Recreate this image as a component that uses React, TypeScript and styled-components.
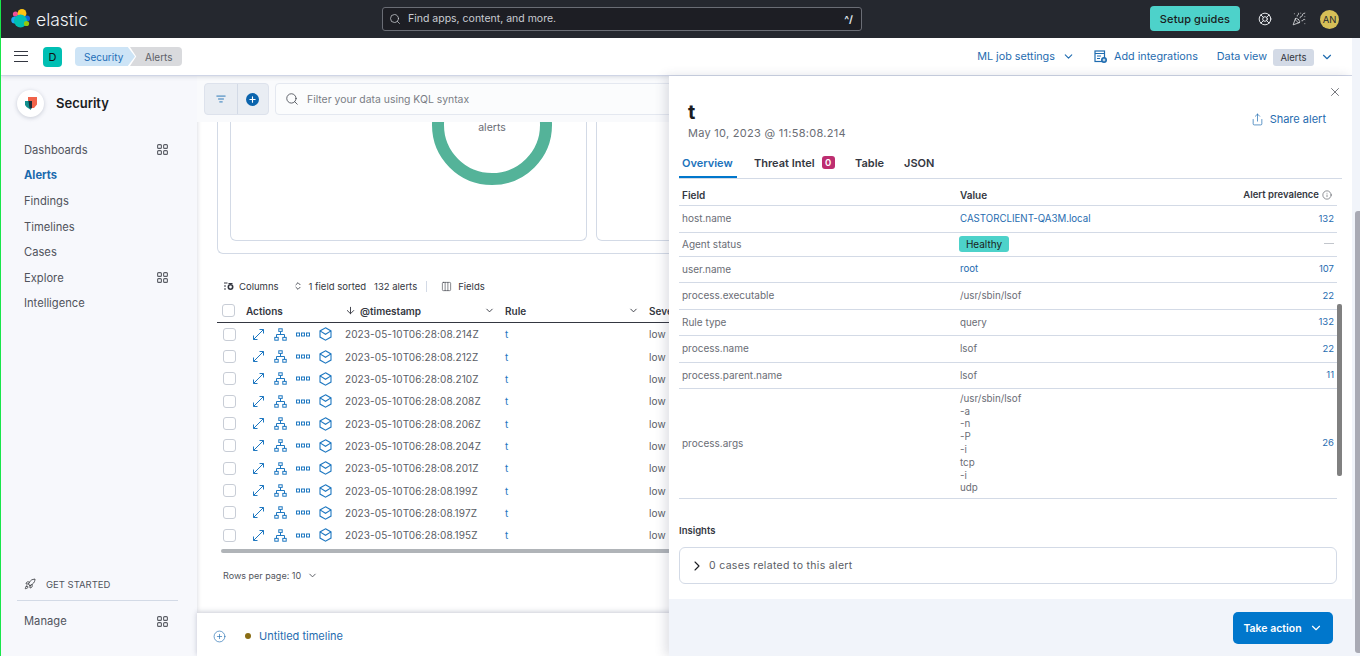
import React from "react"
import styled, { createGlobalStyle } from "styled-components"
import {
  ArrowDown,
  ChevronDown,
  ChevronRight,
  ChevronsUpDown,
  CirclePlus,
  Columns3,
  Info,
  LifeBuoy,
  ListFilter,
  PartyPopper,
  Plus,
  Rocket,
  Search,
  Share,
  X,
} from "lucide-react"

const GlobalStyle = createGlobalStyle`
  html, body {
    margin: 0;
    padding: 0;
    height: 100%;
    overflow: hidden;
    background: #fff;
    font-family: Inter, "Liberation Sans", sans-serif;
    color: #343741;
  }
  * { box-sizing: border-box; }
`

const Page = styled.div`
  position: relative;
  width: 1360px;
  height: 656px;
  overflow: hidden;
  border-left: 1px solid #19e64a;
  display: flex;
  flex-direction: column;
`

/* ---------- top dark bar ---------- */

const TopBar = styled.header`
  flex: 0 0 38px;
  background: #25282f;
  display: grid;
  grid-template-columns: 381px 480px 1fr;
  align-items: center;
  position: relative;
  z-index: 6;
`

const Brand = styled.div`
  display: flex;
  align-items: center;
  gap: 5px;
  padding-left: 10px;
  color: #f2f4f7;
  font-size: 17.5px;
  font-weight: 300;
`

const GlobalSearch = styled.div`
  height: 24px;
  margin-top: -1px;
  border: 1px solid #6a6d75;
  border-radius: 3px;
  background: #1d1e24;
  color: #c9ccd2;
  font-size: 10.5px;
  display: flex;
  align-items: center;
  padding: 0 8px 0 6px;
  gap: 7px;
  svg { color: #c9ccd2; }
`

const Shortcut = styled.span`
  margin-left: auto;
  font-size: 10px;
  font-weight: 700;
  color: #dfe2e8;
`

const TopActions = styled.div`
  display: flex;
  align-items: center;
  padding-left: 288px;
  color: #f0f2f5;
`

const SetupButton = styled.button`
  width: 90px;
  height: 25px;
  margin-top: -1px;
  border: 0;
  border-radius: 4px;
  background: #4dd2ca;
  color: #1a1c21;
  font: 500 11px Inter, sans-serif;
  letter-spacing: 0.1px;
`

const TopIcon = styled.span<{ $gap: number }>`
  display: flex;
  margin-left: ${(p) => p.$gap}px;
`

const Avatar = styled.span`
  width: 19px;
  height: 19px;
  margin-left: 14px;
  border-radius: 50%;
  background: #d6bf57;
  color: #25282f;
  font-size: 9.5px;
  display: flex;
  align-items: center;
  justify-content: center;
`

/* ---------- breadcrumb bar ---------- */

const SubBar = styled.div`
  flex: 0 0 38px;
  background: #fff;
  border-bottom: 1px solid #cfd5e6;
  box-shadow: 0 1px 4px rgba(60, 70, 100, 0.18);
  display: flex;
  align-items: center;
  padding-left: 13px;
  position: relative;
  z-index: 2;
`

const Burger = styled.div`
  width: 14px;
  height: 11px;
  border-top: 1.5px solid #343741;
  border-bottom: 1.5px solid #343741;
  position: relative;
  &::after {
    content: "";
    position: absolute;
    left: 0;
    right: 0;
    top: 2.75px;
    height: 1.5px;
    background: #343741;
  }
`

const SpaceBadge = styled.div`
  width: 19px;
  height: 20px;
  margin-left: 15px;
  border-radius: 4px;
  background: #00bfb3;
  color: #111;
  font-size: 11px;
  display: flex;
  align-items: center;
  justify-content: center;
`

const Crumbs = styled.div`
  display: flex;
  margin-left: 13px;
  font-size: 10px;
  height: 19px;
`

const CrumbFirst = styled.div`
  width: 60px;
  border-radius: 4px 0 0 4px;
  background: #cde4f6;
  color: #1e6fb8;
  display: flex;
  align-items: center;
  padding-left: 9px;
  clip-path: polygon(0 0, 88% 0, 100% 50%, 88% 100%, 0 100%);
`

const CrumbLast = styled.div`
  width: 52px;
  margin-left: -5px;
  border-radius: 0 4px 4px 0;
  background: #d9dadd;
  color: #5c5f68;
  display: flex;
  align-items: center;
  padding-left: 15px;
  clip-path: polygon(0 0, 100% 0, 100% 100%, 0 100%, 12% 50%);
`

const SubActions = styled.div`
  margin-left: auto;
  padding-right: 26px;
  display: flex;
  align-items: center;
  color: #1f6cb0;
  font-size: 10.8px;
`

const SubLink = styled.span<{ $gap?: number }>`
  display: flex;
  align-items: center;
  gap: ${(p) => p.$gap ?? 7}px;
  margin-right: 19px;
  white-space: nowrap;
  &:last-child { margin-right: 0; }
`

const ViewBadge = styled.span`
  width: 41px;
  text-align: center;
  background: #d3dae6;
  color: #343741;
  border-radius: 3px;
  font-size: 9.5px;
  padding: 3px 0;
  margin: 2px 6px 0 6px;
`

/* ---------- body ---------- */

const Body = styled.div`
  flex: 1;
  display: flex;
  min-height: 0;
`

const Sidebar = styled.nav`
  flex: 0 0 196px;
  background: #f7f8fc;
  box-shadow: 1px 0 4px rgba(60, 70, 100, 0.16);
  display: flex;
  flex-direction: column;
  padding: 14px 19px 0 16px;
  position: relative;
  z-index: 1;
`

const SideHead = styled.div`
  display: flex;
  align-items: center;
  gap: 12px;
  font-size: 13px;
  font-weight: 600;
  color: #1a1c21;
  height: 26px;
  margin-bottom: 21px;
`

const LogoDisc = styled.span`
  width: 27px;
  height: 27px;
  border-radius: 50%;
  background: #fff;
  box-shadow: 0 1px 4px rgba(60, 70, 100, 0.25);
  display: flex;
  align-items: center;
  justify-content: center;
`

const NavItem = styled.div<{ $active?: boolean }>`
  height: 25.6px;
  padding: 0 10px 0 7px;
  display: flex;
  align-items: center;
  justify-content: space-between;
  font-size: 11.2px;
  font-weight: ${(p) => (p.$active ? 700 : 400)};
  color: ${(p) => (p.$active ? "#1a69ad" : "#51545c")};
`

const SideFoot = styled.div`
  margin-top: auto;
  padding-bottom: 22px;
`

const GetStarted = styled.div`
  display: flex;
  align-items: center;
  gap: 10px;
  padding: 0 0 10px 7px;
  border-bottom: 1px solid #d3dae6;
  font-size: 9.5px;
  color: #51545c;
  margin-bottom: 7px;
`

const Main = styled.main`
  flex: 1;
  min-width: 0;
  display: flex;
  flex-direction: column;
  background: #fff;
`

const FilterBar = styled.div`
  flex: 0 0 46px;
  background: #f9fafc;
  display: flex;
  align-items: center;
  padding: 0 0 0 7px;
  gap: 6px;
  position: relative;
  z-index: 1;
`

const FilterGroup = styled.div`
  display: flex;
  height: 32px;
  border: 1px solid #dde2ec;
  border-radius: 4px;
  background: #e9edf3;
`

const FilterCell = styled.span`
  width: 31.5px;
  display: flex;
  align-items: center;
  justify-content: center;
  color: #0b64ad;
  & + & { border-left: 1px solid #d3dae6; }
`

const PlusDot = styled.span`
  width: 13px;
  height: 13px;
  border-radius: 50%;
  background: #0b64ad;
  color: #fff;
  display: flex;
  align-items: center;
  justify-content: center;
`

const QueryInput = styled.div`
  flex: 1;
  height: 32px;
  border: 1px solid #e4e8f0;
  border-radius: 4px;
  background: #fbfcfd;
  color: #7a7d85;
  font-size: 10.4px;
  display: flex;
  align-items: center;
  gap: 8px;
  padding-left: 9px;
  svg { color: #343741; }
`

const Scroller = styled.div`
  flex: 1;
  min-height: 0;
  overflow: hidden;
  padding-left: 20px;
`

const ChartCard = styled.div`
  margin-top: -40px;
  height: 172px;
  border: 1px solid #d3dae6;
  border-radius: 6px 0 0 6px;
  border-right: 0;
  padding: 0 0 12px 12px;
  display: flex;
  gap: 9px;
`

const InnerCard = styled.div<{ $grow?: boolean }>`
  width: ${(p) => (p.$grow ? "600px" : "357px")};
  border: 1px solid #d3dae6;
  border-radius: 0 0 6px 6px;
  border-top: 0;
  overflow: hidden;
`

const Donut = styled.div`
  position: relative;
  margin: -18px 0 0 201px;
  width: 120px;
  height: 120px;
`

const DonutText = styled.span`
  position: absolute;
  left: 0;
  right: 0;
  top: 56px;
  text-align: center;
  font-size: 10.5px;
  color: #6a6d75;
`

const GridToolbar = styled.div`
  margin-top: 25px;
  height: 14px;
  display: flex;
  align-items: center;
  padding-left: 7px;
  font-size: 9.5px;
  color: #343741;
`

const ToolItem = styled.span<{ $gap?: number; $left?: number }>`
  display: flex;
  align-items: center;
  gap: ${(p) => p.$gap ?? 5}px;
  margin-left: ${(p) => p.$left ?? 0}px;
  white-space: nowrap;
`

const ToolDivider = styled.span`
  width: 1px;
  height: 11px;
  margin: 0 14px 0 9px;
  background: #d3dae6;
`

const GridHead = styled.div`
  display: grid;
  grid-template-columns: 24px 99px 160px 144px 1fr;
  align-items: center;
  height: 22px;
  margin-top: 8px;
  border-bottom: 1px solid #343741;
  padding: 0 0 2px 5px;
  width: 470px;
  font-size: 10px;
  font-weight: 600;
  color: #343741;
`

const HeadCell = styled.span`
  display: flex;
  align-items: center;
  justify-content: space-between;
  padding-right: 10px;
  white-space: nowrap;
`

const HeadLabel = styled.span`
  display: flex;
  align-items: center;
  gap: 4px;
`

const Check = styled.span`
  display: block;
  width: 13px;
  height: 13px;
  border: 1px solid #c8cdd6;
  border-radius: 3px;
  background: #fff;
`

const GridRow = styled.div`
  display: grid;
  grid-template-columns: 25px 97px 160px 144px 1fr;
  align-items: center;
  height: 22.35px;
  padding-left: 6px;
  width: 470px;
  font-size: 10px;
  color: #5a5d65;
  letter-spacing: 0.1px;
  white-space: nowrap;
`

const RowActions = styled.span`
  display: flex;
  align-items: center;
  gap: 9px;
  padding-left: 3.5px;
  color: #1f78c1;
`

const RuleLink = styled.span`
  color: #1f78c1;
`

const HScroll = styled.div`
  margin: 3px 0 0 4px;
  height: 4px;
  border-radius: 2px 0 0 2px;
  background: #b0b4b8;
`

const RowsPerPage = styled.div`
  margin: 17px 0 0 6px;
  display: flex;
  align-items: center;
  gap: 6px;
  font-size: 9px;
  color: #51545c;
`

const TimelineBar = styled.div`
  position: absolute;
  left: 196px;
  right: 0;
  bottom: 0;
  height: 43px;
  padding: 3px 0 0 16px;
  background: #fff;
  box-shadow: 0 -1px 5px rgba(60, 70, 100, 0.28);
  display: flex;
  align-items: center;
  color: #1f6cb0;
  font-size: 11px;
  z-index: 3;
`

const StatusDot = styled.span`
  width: 6px;
  height: 6px;
  margin: 0 8px 0 19px;
  border-radius: 50%;
  background: #8a6d14;
`

/* ---------- alert flyout ---------- */

const Flyout = styled.aside`
  position: absolute;
  top: 76px;
  left: 668px;
  width: 683px;
  bottom: 0;
  background: #fff;
  box-shadow: -4px 0 10px rgba(60, 70, 100, 0.16);
  display: flex;
  flex-direction: column;
  z-index: 4;
`

const CloseButton = styled.span`
  position: absolute;
  top: 9px;
  right: 10px;
  color: #4a4d55;
  display: flex;
`

const FlyoutHead = styled.div`
  padding: 25px 26px 0 19px;
  display: grid;
  grid-template-columns: 1fr auto;
  height: 76px;
`

const AlertTitle = styled.h2`
  margin: 0;
  font-size: 20px;
  line-height: 22px;
  font-weight: 700;
  color: #1a1c21;
`

const AlertDate = styled.div`
  font-size: 11px;
  letter-spacing: 0.28px;
  color: #6a6d75;
  margin-top: 3px;
`

const ShareLink = styled.span`
  display: flex;
  align-items: center;
  gap: 6px;
  height: 20px;
  margin-top: 8px;
  font-size: 11px;
  color: #1f6cb0;
`

const FlyoutBody = styled.div`
  flex: 1;
  min-height: 0;
  padding: 0 15px 0 10px;
  position: relative;
`

const Tabs = styled.div`
  height: 27px;
  border-bottom: 1px solid #d3dae6;
  margin-right: -5px;
  display: flex;
  gap: 14px;
  font-size: 11px;
  font-weight: 600;
  color: #343741;
`

const Tab = styled.span<{ $active?: boolean; $width: number }>`
  width: ${(p) => p.$width}px;
  height: 26px;
  padding: 2px 0 0 3px;
  display: flex;
  align-items: flex-start;
  gap: 7px;
  line-height: 18px;
  color: ${(p) => (p.$active ? "#1a72bb" : "#343741")};
  ${(p) => p.$active && "box-shadow: inset 0 -2px 0 #0077cc;"}
`

const TabCount = styled.span`
  width: 13px;
  height: 13px;
  margin-top: 2px;
  border-radius: 3px;
  background: #bd2e70;
  color: #fff;
  font-size: 9.5px;
  line-height: 13px;
  text-align: center;
`

const InfoRow = styled.div<{ $height: number }>`
  display: grid;
  grid-template-columns: 278px 1fr 120px;
  align-items: center;
  height: ${(p) => p.$height}px;
  padding: 0 3px 2px;
  border-bottom: 1px solid #d3dae6;
  font-size: 10px;
  color: #6a6d75;
`

const HeaderRow = styled(InfoRow)`
  padding-top: 5px;
  padding-bottom: 0;
  color: #343741;
  font-weight: 600;
`

const ValueLink = styled.span`
  color: #1f6cb0;
  font-size: 9.7px;
`

const PlainValue = styled.span`
  margin-top: 3px;
  color: #6a6d75;
  font-size: 9.8px;
  line-height: 12.8px;
`

const Count = styled.span`
  text-align: right;
  color: #1f6cb0;
  font-size: 9.5px;
`

const PrevalenceHead = styled.span`
  display: flex;
  justify-content: flex-end;
  align-items: center;
  gap: 3px;
  padding-right: 2px;
  font-size: 9.5px;
  white-space: nowrap;
`

const Healthy = styled.span`
  justify-self: start;
  width: 50px;
  height: 16px;
  margin-left: -1px;
  border-radius: 3px;
  background: #4dd2ca;
  color: #1a1c21;
  font-size: 10px;
  display: flex;
  align-items: center;
  justify-content: center;
`

const Dash = styled.span`
  justify-self: end;
  width: 10px;
  height: 1px;
  background: #c2c6cc;
`

const InnerThumb = styled.div`
  position: absolute;
  top: 152px;
  right: 10px;
  width: 5px;
  height: 172px;
  border-radius: 2px;
  background: #808080;
`

const InsightsTitle = styled.div`
  margin-top: 26px;
  font-size: 9.5px;
  font-weight: 600;
  color: #343741;
`

const CasesBox = styled.div`
  margin-top: 11px;
  height: 37px;
  border: 1px solid #d3dae6;
  border-radius: 6px;
  display: flex;
  align-items: center;
  gap: 4px;
  padding-left: 9px;
  font-size: 10.5px;
  letter-spacing: 0.32px;
  color: #5a5d65;
  svg { color: #1a1c21; }
`

const FlyoutFoot = styled.div`
  flex: 0 0 57px;
  background: #f1f4fa;
  display: flex;
  justify-content: flex-end;
  padding: 13px 19px 0 0;
`

const TakeAction = styled.button`
  width: 100px;
  height: 32px;
  border: 0;
  border-radius: 5px;
  background: #0077cc;
  color: #fff;
  font: 600 10.5px Inter, sans-serif;
  display: flex;
  align-items: center;
  justify-content: center;
  gap: 7px;
`

const PageTrack = styled.div`
  position: absolute;
  top: 38px;
  right: 0;
  bottom: 0;
  width: 8px;
  padding: 173px 0 3px 3px;
  background: #f1f4fa;
  z-index: 5;
`

const PageThumb = styled.div`
  height: 100%;
  border-radius: 3px 0 0 3px;
  background: #a9aab4;
`

/* ---------- drawn icons ---------- */

const ElasticLogo = () => (
  <svg width="20" height="20" viewBox="0 0 20 20">
    <circle cx="4.500" cy="5" r="2.600" fill="#f04e98" />
    <circle cx="11" cy="4.400" r="4.400" fill="#fec514" />
    <circle cx="3.800" cy="11" r="3.600" fill="#1ba9f5" />
    <circle cx="16" cy="9.500" r="3" fill="#0b64dd" />
    <circle cx="9.500" cy="12" r="6.500" fill="#00bfb3" />
    <circle cx="15.500" cy="14.500" r="2.600" fill="#93c90e" />
  </svg>
)

const SecurityLogo = () => (
  <svg width="16" height="16" viewBox="0 0 16 16">
    <path d="M5 2h9v7.500L11 13H9V6H5z" fill="#f0634a" />
    <path d="M2 6h6v9L3.500 12 2 10z" fill="#12908e" />
    <path d="M5.500 6H9v7.500L6.500 13z" fill="#1a2e3a" />
  </svg>
)

const AppsIcon = () => (
  <svg width="11" height="11" viewBox="0 0 11 11" fill="none" stroke="#5a5d65" strokeWidth="1.1">
    <rect x="0.6" y="0.6" width="3.8" height="3.8" rx="1" />
    <rect x="6.6" y="0.6" width="3.8" height="3.8" rx="1" />
    <rect x="0.6" y="6.6" width="3.8" height="3.8" rx="1" />
    <rect x="6.6" y="6.6" width="3.8" height="3.8" rx="1" />
  </svg>
)

const IntegrationIcon = () => (
  <svg width="13" height="13" viewBox="0 0 13 13" fill="none">
    <rect x="1" y="1" width="9.500" height="10.500" stroke="#1f6cb0" strokeWidth="1.2" />
    <path d="M1 3.500h9.500M3 6h4M3 8.500h3" stroke="#1f6cb0" />
    <circle cx="10" cy="10" r="3" fill="#1f6cb0" />
    <path d="M8.600 10h2.800M10 8.600v2.800" stroke="#fff" strokeWidth="0.9" />
  </svg>
)

const ColumnsIcon = () => (
  <svg width="10" height="10" viewBox="0 0 10 10" fill="none" stroke="#343741">
    <path d="M0 2h3.500M0 5h2M0 8h2" strokeWidth="1" />
    <circle cx="6.500" cy="6" r="2.200" strokeWidth="1.600" />
    <path d="M4.500 2.500h4" strokeWidth="1" />
  </svg>
)

const ExpandIcon = () => (
  <svg width="13" height="13" viewBox="0 0 13 13" fill="none" stroke="currentColor" strokeWidth="1">
    <path d="M1.500 11.500 11.500 1.500M7.500 1.500h4v4M1.500 7.500v4h4" />
  </svg>
)

const TreeIcon = () => (
  <svg width="13" height="13" viewBox="0 0 13 13" fill="none" stroke="currentColor" strokeWidth="1">
    <rect x="4.800" y="0.800" width="3.400" height="2.600" />
    <rect x="0.800" y="9.400" width="3.400" height="2.800" />
    <rect x="8.800" y="9.400" width="3.400" height="2.800" />
    <path d="M6.500 3.400v3M2.500 9.400V6.500h8v2.900" />
  </svg>
)

const DotsIcon = () => (
  <svg width="14" height="13" viewBox="0 0 14 13" fill="none" stroke="currentColor" strokeWidth="1">
    <rect x="0.500" y="5" width="3" height="3" />
    <rect x="5.500" y="5" width="3" height="3" />
    <rect x="10.500" y="5" width="3" height="3" />
  </svg>
)

const CubeIcon = () => (
  <svg width="13" height="14" viewBox="0 0 13 14" fill="none" stroke="currentColor" strokeWidth="1.100">
    <path d="M6.500 0.800 12 3.900v6.200l-5.500 3.100L1 10.100V3.900zM1 3.900l5.500 3.400L12 3.900" />
  </svg>
)

/* ---------- data ---------- */

const navItems = [
  { label: "Dashboards", apps: true },
  { label: "Alerts", active: true },
  { label: "Findings" },
  { label: "Timelines" },
  { label: "Cases" },
  { label: "Explore", apps: true },
  { label: "Intelligence" },
]

const stamps = ["214", "212", "210", "208", "206", "204", "201", "199", "197", "195"]

const fields = [
  { name: "host.name", value: "CASTORCLIENT-QA3M.local", count: "132", link: true, height: 27 },
  { name: "user.name", value: "root", count: "107", link: true, height: 26 },
  { name: "process.executable", value: "/usr/sbin/lsof", count: "22", height: 27 },
  { name: "Rule type", value: "query", count: "132", height: 26 },
  { name: "process.name", value: "lsof", count: "22", height: 27 },
  { name: "process.parent.name", value: "lsof", count: "11", height: 26 },
]

const args = ["/usr/sbin/lsof", "-a", "-n", "-P", "-i", "tcp", "-i", "udp"]

const FieldRow = ({ row }: { row: (typeof fields)[number] }) => (
  <InfoRow $height={row.height}>
    <span>{row.name}</span>
    {row.link ? <ValueLink>{row.value}</ValueLink> : <PlainValue>{row.value}</PlainValue>}
    <Count>{row.count}</Count>
  </InfoRow>
)

export default function App() {
  return (
    <Page>
      <GlobalStyle />
      <TopBar>
        <Brand>
          <ElasticLogo />
          elastic
        </Brand>
        <GlobalSearch>
          <Search size={12} strokeWidth={1.5} />
          Find apps, content, and more.
          <Shortcut>^/</Shortcut>
        </GlobalSearch>
        <TopActions>
          <SetupButton>Setup guides</SetupButton>
          <TopIcon $gap={18}>
            <LifeBuoy size={14} strokeWidth={1.6} />
          </TopIcon>
          <TopIcon $gap={20}>
            <PartyPopper size={14} strokeWidth={1.3} />
          </TopIcon>
          <Avatar>AN</Avatar>
        </TopActions>
      </TopBar>

      <SubBar>
        <Burger />
        <SpaceBadge>D</SpaceBadge>
        <Crumbs>
          <CrumbFirst>Security</CrumbFirst>
          <CrumbLast>Alerts</CrumbLast>
        </Crumbs>
        <SubActions>
          <SubLink>
            ML job settings <ChevronDown size={13} />
          </SubLink>
          <SubLink>
            <IntegrationIcon /> Add integrations
          </SubLink>
          <SubLink $gap={0}>
            Data view
            <ViewBadge>Alerts</ViewBadge>
            <ChevronDown size={14} />
          </SubLink>
        </SubActions>
      </SubBar>

      <Body>
        <Sidebar>
          <SideHead>
            <LogoDisc>
              <SecurityLogo />
            </LogoDisc>
            Security
          </SideHead>
          {navItems.map((item) => (
            <NavItem key={item.label} $active={item.active}>
              {item.label}
              {item.apps && <AppsIcon />}
            </NavItem>
          ))}
          <SideFoot>
            <GetStarted>
              <Rocket size={12} strokeWidth={1.4} color="#1a1c21" />
              GET STARTED
            </GetStarted>
            <NavItem>
              Manage
              <AppsIcon />
            </NavItem>
          </SideFoot>
        </Sidebar>

        <Main>
          <FilterBar>
            <FilterGroup>
              <FilterCell>
                <ListFilter size={10} />
              </FilterCell>
              <FilterCell>
                <PlusDot>
                  <Plus size={9} strokeWidth={3} />
                </PlusDot>
              </FilterCell>
            </FilterGroup>
            <QueryInput>
              <Search size={14} strokeWidth={1.3} />
              Filter your data using KQL syntax
            </QueryInput>
          </FilterBar>

          <Scroller>
            <ChartCard>
              <InnerCard>
                <Donut>
                  <svg width="120" height="120" viewBox="0 0 120 120">
                    <circle cx="60" cy="60" r="54" fill="none" stroke="#54b399" strokeWidth="12" />
                  </svg>
                  <DonutText>alerts</DonutText>
                </Donut>
              </InnerCard>
              <InnerCard $grow />
            </ChartCard>

            <GridToolbar>
              <ToolItem>
                <ColumnsIcon />
                Columns
              </ToolItem>
              <ToolItem $left={14} $gap={6}>
                <ChevronsUpDown size={10} />
                1 field sorted
              </ToolItem>
              <ToolItem $left={8}>132 alerts</ToolItem>
              <ToolDivider />
              <ToolItem $gap={6}>
                <Columns3 size={11} strokeWidth={1.3} />
                Fields
              </ToolItem>
            </GridToolbar>

            <GridHead>
              <Check />
              <HeadCell>Actions</HeadCell>
              <HeadCell>
                <HeadLabel>
                  <ArrowDown size={11} />
                  @timestamp
                </HeadLabel>
                <ChevronDown size={11} />
              </HeadCell>
              <HeadCell>
                Rule
                <ChevronDown size={11} />
              </HeadCell>
              <HeadCell>Severity</HeadCell>
            </GridHead>

            {stamps.map((ms) => (
              <GridRow key={ms}>
                <Check />
                <RowActions>
                  <ExpandIcon />
                  <TreeIcon />
                  <DotsIcon />
                  <CubeIcon />
                </RowActions>
                <span>2023-05-10T06:28:08.{ms}Z</span>
                <RuleLink>t</RuleLink>
                <span>low</span>
              </GridRow>
            ))}

            <HScroll />
            <RowsPerPage>
              Rows per page: 10 <ChevronDown size={11} />
            </RowsPerPage>
          </Scroller>
        </Main>
      </Body>

      <TimelineBar>
        <CirclePlus size={13} strokeWidth={1.2} />
        <StatusDot />
        Untitled timeline
      </TimelineBar>

      <Flyout>
        <CloseButton>
          <X size={14} strokeWidth={1.3} />
        </CloseButton>
        <FlyoutHead>
          <div>
            <AlertTitle>t</AlertTitle>
            <AlertDate>May 10, 2023 @ 11:58:08.214</AlertDate>
          </div>
          <ShareLink>
            <Share size={13} strokeWidth={1.3} />
            Share alert
          </ShareLink>
        </FlyoutHead>

        <FlyoutBody>
          <Tabs>
            <Tab $active $width={58}>Overview</Tab>
            <Tab $width={87}>
              Threat Intel <TabCount>0</TabCount>
            </Tab>
            <Tab $width={35}>Table</Tab>
            <Tab $width={40}>JSON</Tab>
          </Tabs>

          <HeaderRow $height={27}>
            <span>Field</span>
            <span>Value</span>
            <PrevalenceHead>
              Alert prevalence <Info size={10} strokeWidth={1.3} />
            </PrevalenceHead>
          </HeaderRow>
          <FieldRow row={fields[0]} />
          <InfoRow $height={24}>
            <span>Agent status</span>
            <Healthy>Healthy</Healthy>
            <Dash />
          </InfoRow>
          {fields.slice(1).map((row) => (
            <FieldRow key={row.name} row={row} />
          ))}
          <InfoRow $height={110}>
            <span>process.args</span>
            <PlainValue>
              {args.map((arg, i) => (
                <div key={i}>{arg}</div>
              ))}
            </PlainValue>
            <Count>26</Count>
          </InfoRow>
          <InnerThumb />

          <InsightsTitle>Insights</InsightsTitle>
          <CasesBox>
            <ChevronRight size={16} strokeWidth={1.6} />
            0 cases related to this alert
          </CasesBox>
        </FlyoutBody>

        <FlyoutFoot>
          <TakeAction>
            Take action <ChevronDown size={14} />
          </TakeAction>
        </FlyoutFoot>
      </Flyout>

      <PageTrack>
        <PageThumb />
      </PageTrack>
    </Page>
  )
}
